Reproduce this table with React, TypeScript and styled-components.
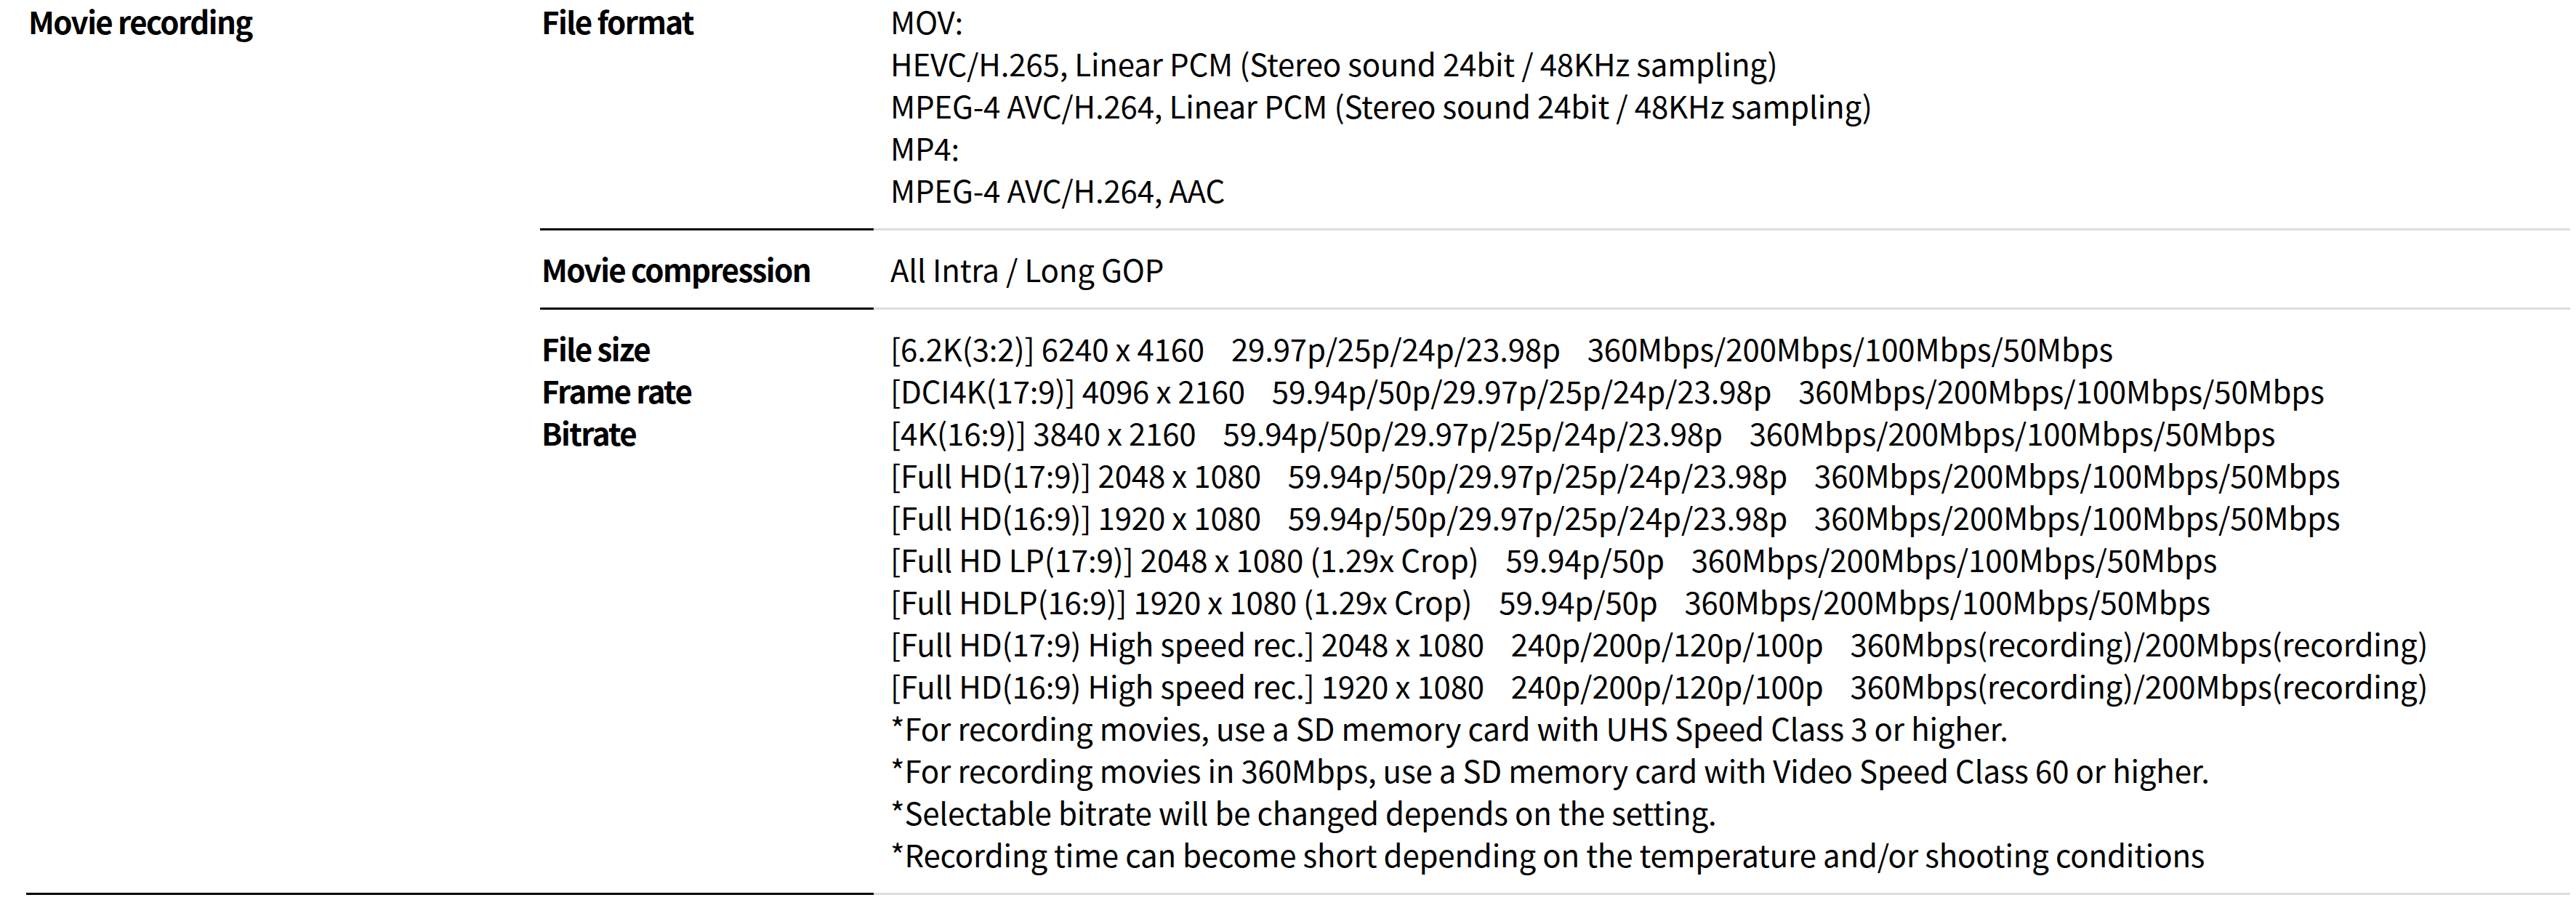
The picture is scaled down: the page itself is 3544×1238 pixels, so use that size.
import React from "react";
import styled, { createGlobalStyle } from "styled-components";

const GlobalStyle = createGlobalStyle`
  html, body {
    margin: 0;
    padding: 0;
    background: #ffffff;
  }
  body {
    font-family: "Noto Sans CJK JP", "Noto Sans", sans-serif;
    color: #000000;
  }
`;

const Page = styled.div`
  padding: 0 8px 0 36px;
`;

const SpecTable = styled.table`
  width: 100%;
  border-collapse: collapse;
  table-layout: fixed;
  font-size: 42px;
  line-height: 58px;

  tr:first-child > th,
  tr:first-child > td {
    padding-top: 0;
  }
`;

const Col = styled.col<{ $w?: number }>`
  width: ${(p) => (p.$w ? `${p.$w}px` : "auto")};
`;

const GroupHead = styled.th`
  text-align: left;
  vertical-align: top;
  font-weight: 700;
  letter-spacing: -1.6px;
  padding: 0 0 24px 3px;
  border-bottom: 3px solid #000000;
`;

const ItemHead = styled.th`
  text-align: left;
  vertical-align: top;
  font-weight: 700;
  letter-spacing: -1.6px;
  padding: 24px 0 24px 2px;
  border-bottom: 3px solid #000000;
`;

const Value = styled.td`
  vertical-align: top;
  font-weight: 400;
  letter-spacing: -0.18px;
  padding: 24px 0 24px 23px;
  border-bottom: 3px solid #dddddd;
`;

const Line = styled.div`
  white-space: pre;
`;

const GAP = "\u00a0\u00a0\u00a0\u00a0";

const formats = [
  "MOV:",
  "HEVC/H.265, Linear PCM (Stereo sound 24bit / 48KHz sampling)",
  "MPEG-4 AVC/H.264, Linear PCM (Stereo sound 24bit / 48KHz sampling)",
  "MP4:",
  "MPEG-4 AVC/H.264, AAC",
];

const sizes: string[][] = [
  ["[6.2K(3:2)] 6240 x 4160", "29.97p/25p/24p/23.98p", "360Mbps/200Mbps/100Mbps/50Mbps"],
  ["[DCI4K(17:9)] 4096 x 2160", "59.94p/50p/29.97p/25p/24p/23.98p", "360Mbps/200Mbps/100Mbps/50Mbps"],
  ["[4K(16:9)] 3840 x 2160", "59.94p/50p/29.97p/25p/24p/23.98p", "360Mbps/200Mbps/100Mbps/50Mbps"],
  ["[Full HD(17:9)] 2048 x 1080", "59.94p/50p/29.97p/25p/24p/23.98p", "360Mbps/200Mbps/100Mbps/50Mbps"],
  ["[Full HD(16:9)] 1920 x 1080", "59.94p/50p/29.97p/25p/24p/23.98p", "360Mbps/200Mbps/100Mbps/50Mbps"],
  ["[Full HD LP(17:9)] 2048 x 1080 (1.29x Crop)", "59.94p/50p", "360Mbps/200Mbps/100Mbps/50Mbps"],
  ["[Full HDLP(16:9)] 1920 x 1080 (1.29x Crop)", "59.94p/50p", "360Mbps/200Mbps/100Mbps/50Mbps"],
  ["[Full HD(17:9) High speed rec.] 2048 x 1080", "240p/200p/120p/100p", "360Mbps(recording)/200Mbps(recording)"],
  ["[Full HD(16:9) High speed rec.] 1920 x 1080", "240p/200p/120p/100p", "360Mbps(recording)/200Mbps(recording)"],
];

const notes = [
  "*For recording movies, use a SD memory card with UHS Speed Class 3 or higher.",
  "*For recording movies in 360Mbps, use a SD memory card with Video Speed Class 60 or higher.",
  "*Selectable bitrate will be changed depends on the setting.",
  "*Recording time can become short depending on the temperature and/or shooting conditions",
];

export default function App() {
  return (
    <>
      <GlobalStyle />
      <Page>
        <SpecTable>
          <colgroup>
            <Col $w={707} />
            <Col $w={459} />
            <Col />
          </colgroup>
          <tbody>
            <tr>
              <GroupHead rowSpan={3}>Movie recording</GroupHead>
              <ItemHead>File format</ItemHead>
              <Value>
                {formats.map((f) => (
                  <Line key={f}>{f}</Line>
                ))}
              </Value>
            </tr>
            <tr>
              <ItemHead>Movie compression</ItemHead>
              <Value>
                <Line>All Intra / Long GOP</Line>
              </Value>
            </tr>
            <tr>
              <ItemHead>
                File size
                <br />
                Frame rate
                <br />
                Bitrate
              </ItemHead>
              <Value>
                {sizes.map((s) => (
                  <Line key={s[0]}>{s.join(GAP)}</Line>
                ))}
                {notes.map((n) => (
                  <Line key={n}>{n}</Line>
                ))}
              </Value>
            </tr>
          </tbody>
        </SpecTable>
      </Page>
    </>
  );
}
